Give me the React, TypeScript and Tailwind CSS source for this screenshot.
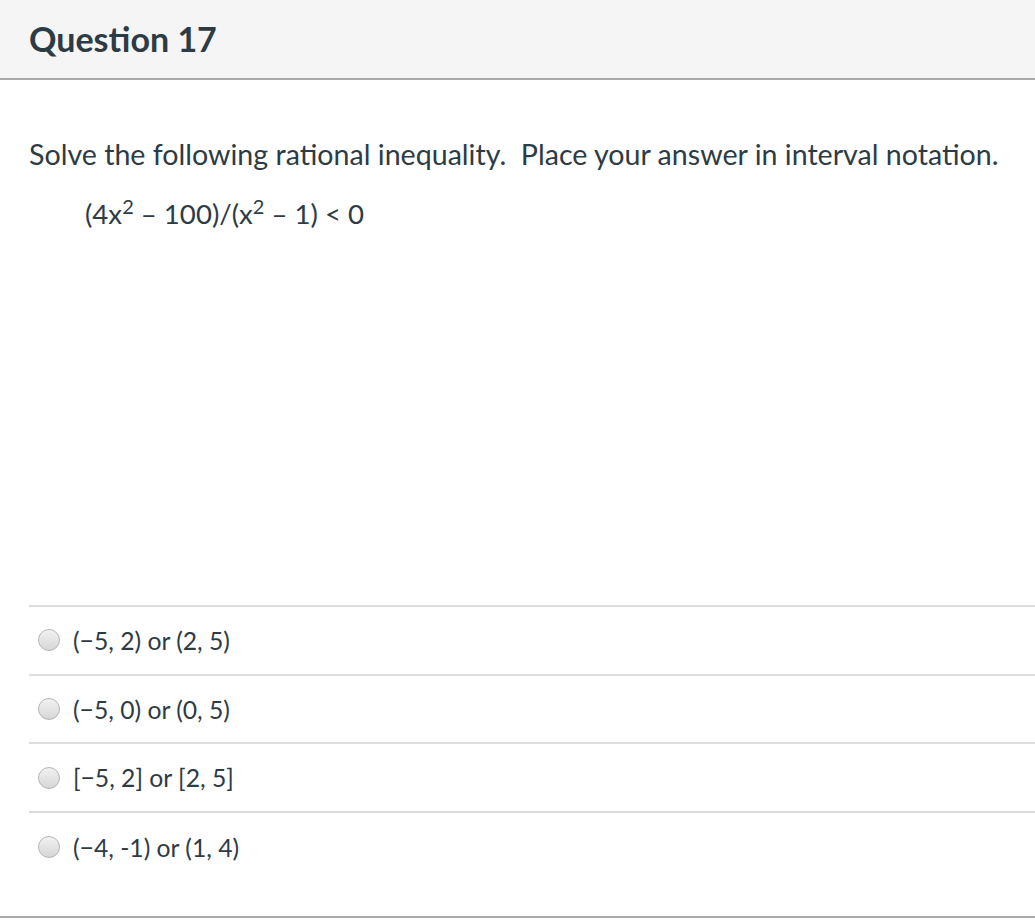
import React from 'react';

const answers = ['(−5, 2) or (2, 5)', '(−5, 0) or (0, 5)', '[−5, 2] or [2, 5]', '(−4, -1) or (1, 4)'];

const Radio = () => (
  <span className="w-[22px] h-[22px] rounded-full border border-[#b5b5b5] bg-gradient-to-b from-[#f2f2f2] to-[#d6d6d6] shrink-0" />
);

export default function App() {
  return (
    <div className="w-[1035px] h-[924px] bg-white text-[#2d3b45] font-['Lato',sans-serif] overflow-hidden">
      <div className="h-[80px] bg-[#f5f5f5] border-b-2 border-[#aaaaaa] flex items-center px-[29px]">
        <h2 className="text-[34px] font-bold leading-none">Question 17</h2>
      </div>
      <div className="pl-[29px] pt-[55px]">
        <p className="text-[28.6px] leading-[38px]">Solve the following rational inequality.&nbsp; Place your answer in interval notation.</p>
        <p className="text-[27.6px] leading-[38px] pl-[56px] mt-[22px]">
          (4x<sup className="text-[20px]">2</sup> – 100)/(x<sup className="text-[20px]">2</sup> – 1) &lt; 0
        </p>
        <div className="mt-[372px] border-t-2 border-[#dddddd]">
          {answers.map((a, i) => (
            <div key={i} className={`h-[68.7px] flex items-center gap-[13px] pl-[9px] ${i < 3 ? 'border-b-2 border-[#dddddd]' : ''}`}>
              <Radio />
              <span className="text-[24.7px]">{a}</span>
            </div>
          ))}
        </div>
      </div>
      <div className="mt-[34px] border-b-2 border-[#aaaaaa]" />
    </div>
  );
}
